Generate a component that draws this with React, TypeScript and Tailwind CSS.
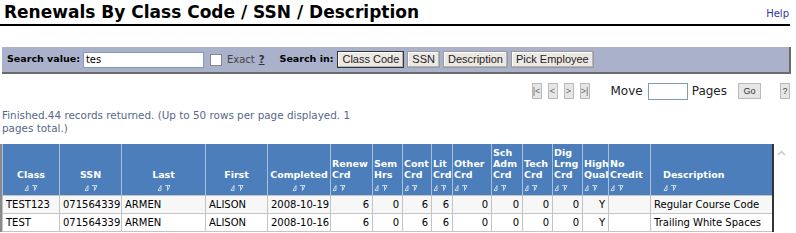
import React from 'react';

const cols = [
  { label: ['Class'], w: 57 },
  { label: ['SSN'], w: 62 },
  { label: ['Last'], w: 84 },
  { label: ['First'], w: 62 },
  { label: ['Completed'], w: 63 },
  { label: ['Renew', 'Crd'], w: 42 },
  { label: ['Sem', 'Hrs'], w: 30 },
  { label: ['Cont', 'Crd'], w: 29 },
  { label: ['Lit', 'Crd'], w: 21 },
  { label: ['Other', 'Crd'], w: 39 },
  { label: ['Sch', 'Adm', 'Crd'], w: 31 },
  { label: ['Tech', 'Crd'], w: 30 },
  { label: ['Dig', 'Lrng', 'Crd'], w: 30 },
  { label: ['High', 'Qual'], w: 26 },
  { label: ['No', 'Credit'], w: 42 },
  { label: ['Description'], w: 122 },
];

const rows = [
  ['TEST123', '071564339', 'ARMEN', 'ALISON', '2008-10-19', '6', '0', '6', '6', '0', '0', '0', '0', 'Y', '', 'Regular Course Code'],
  ['TEST', '071564339', 'ARMEN', 'ALISON', '2008-10-16', '6', '0', '6', '6', '0', '0', '0', '0', 'Y', '', 'Trailing White Spaces'],
];

const numeric = new Set([5, 6, 7, 8, 9, 10, 11, 12, 13]);

function SortArrows() {
  return (
    <svg width="14" height="6" viewBox="0 0 14 6" className="inline-block">
      <path d="M1 5.5 L4 0.5 L4 5.5 Z" fill="none" stroke="#c9d7ea" strokeWidth="1" />
      <path d="M8 0.5 L13 0.5 M10.5 0.5 L10.5 5.5 L13 0.5" fill="none" stroke="#c9d7ea" strokeWidth="1" />
    </svg>
  );
}

function WinButton({ children, active }: { children: React.ReactNode; active?: boolean }) {
  return (
    <button
      className={`h-[17px] px-[4px] bg-[#ece9e4] text-[11px] leading-none text-[#222] border ${
        active ? 'border-[#333]' : 'border-[#9a9a9a]'
      } shadow-[inset_-1px_-1px_0_#b5b5b5,inset_1px_1px_0_#fff]`}
      style={{ fontFamily: '"Liberation Sans", Arial, sans-serif' }}
    >
      {children}
    </button>
  );
}

function PagerButton({ children }: { children: React.ReactNode }) {
  return (
    <button
      className="h-[16px] w-[10px] bg-[#e6e6e6] border border-[#b9b9b9] text-[9px] leading-none text-[#666] flex items-center justify-center"
      style={{ fontFamily: '"Liberation Sans", Arial, sans-serif' }}
    >
      {children}
    </button>
  );
}

export default function App() {
  return (
    <div className="w-[796px] h-[233px] overflow-hidden bg-white text-[10px] text-black" style={{ fontFamily: '"DejaVu Sans", Verdana, sans-serif' }}>
      {/* title */}
      <div className="w-[790px] flex items-end justify-between border-b-2 border-black pl-[4px] h-[26px]">
        <h1 className="text-[17px] font-bold leading-none pb-[3px]">Renewals By Class Code / SSN / Description</h1>
        <a className="text-[10px] text-[#3333aa] pb-[3px] pr-[1px]">Help</a>
      </div>

      {/* search bar */}
      <div className="ml-[2px] mt-[21px] w-[789px] h-[27px] bg-[#aab1cb] border-r-2 border-b-2 border-[#6b6b6b] flex items-center pl-[5px]">
        <span className="font-bold text-[9.5px]">Search value:</span>
        <input
          className="ml-[3px] w-[121px] h-[16px] bg-white border border-[#7f9db9] px-[2px] text-[10px] outline-none"
          defaultValue="tes"
          style={{ fontFamily: '"DejaVu Sans", Verdana, sans-serif' }}
        />
        <span className="ml-[6px] w-[12px] h-[12px] bg-white border border-[#888]" />
        <span className="ml-[5px] text-[#444]">Exact</span>
        <span className="ml-[4px] font-bold underline text-[#333]">?</span>
        <span className="ml-[15px] font-bold text-[9.5px]">Search in:</span>
        <div className="ml-[4px] flex gap-[3px]">
          <WinButton active>Class Code</WinButton>
          <WinButton>SSN</WinButton>
          <WinButton>Description</WinButton>
          <WinButton>Pick Employee</WinButton>
        </div>
      </div>

      {/* pager */}
      <div className="w-[790px] mt-[8px] flex items-center justify-end h-[18px]">
        <div className="flex gap-[6px]">
          <PagerButton>|&lt;</PagerButton>
          <PagerButton>&lt;</PagerButton>
          <PagerButton>&gt;</PagerButton>
          <PagerButton>&gt;|</PagerButton>
        </div>
        <span className="ml-[21px] text-[12px] text-[#222]">Move</span>
        <input className="ml-[5px] w-[40px] h-[17px] bg-white border border-[#7f9db9] outline-none" />
        <span className="ml-[4px] text-[12px] text-[#222]">Pages</span>
        <button
          className="ml-[11px] h-[16px] w-[23px] bg-[#e6e6e6] border border-[#b9b9b9] text-[9px] text-[#333] leading-none"
          style={{ fontFamily: '"Liberation Sans", Arial, sans-serif' }}
        >
          Go
        </button>
        <button
          className="ml-[19px] h-[16px] w-[10px] bg-[#e6e6e6] border border-[#b9b9b9] text-[9px] text-[#444] leading-none"
          style={{ fontFamily: '"Liberation Sans", Arial, sans-serif' }}
        >
          ?
        </button>
      </div>

      {/* status */}
      <p className="mt-[9px] ml-[2px] w-[372px] text-[10.4px] leading-[13px] text-[#56688a]">
        Finished.44 records returned. (Up to 50 rows per page displayed. 1 pages total.)
      </p>

      {/* table + scrollbar */}
      <div className="mt-[9px] flex">
        <div className="border-l-2 border-[#8a8a8a]">
          <table className="table-fixed border-collapse w-[770px] border-r-2 border-[#333]">
            <colgroup>
              {cols.map((c, i) => (
                <col key={i} style={{ width: c.w }} />
              ))}
            </colgroup>
            <thead>
              <tr className="h-[51px] bg-[#4b7eba]">
                {cols.map((c, i) => (
                  <th
                    key={i}
                    className={`align-bottom border-x border-[#a9c0dd] pb-[3px] text-white font-bold text-[9.5px] leading-[11px] whitespace-nowrap ${
                      i === 15 ? 'text-left pl-[12px]' : i >= 5 ? 'text-left pl-[1px] pr-0' : 'text-center px-[2px]'
                    }`}
                  >
                    {c.label.map((l, j) => (
                      <div key={j}>{l}</div>
                    ))}
                    <div className="mt-[2px] leading-none">
                      <SortArrows />
                    </div>
                  </th>
                ))}
              </tr>
            </thead>
            <tbody>
              {rows.map((r, ri) => (
                <tr key={ri} className={`h-[18px] ${ri === 0 ? 'bg-[#f7f7f7]' : 'bg-white'}`}>
                  {r.map((v, ci) => (
                    <td
                      key={ci}
                      className={`border border-[#c4c4c4] px-[3px] text-[10px] whitespace-nowrap overflow-hidden ${
                        numeric.has(ci) ? 'text-right' : 'text-left'
                      }`}
                    >
                      {v}
                    </td>
                  ))}
                </tr>
              ))}
            </tbody>
          </table>
        </div>
        <div className="w-[16px] pt-[6px] flex justify-center">
          <svg width="9" height="6" viewBox="0 0 9 6">
            <path d="M1 5 L4.5 1.5 L8 5" fill="none" stroke="#c8c8c8" strokeWidth="1.5" />
          </svg>
        </div>
      </div>
    </div>
  );
}
